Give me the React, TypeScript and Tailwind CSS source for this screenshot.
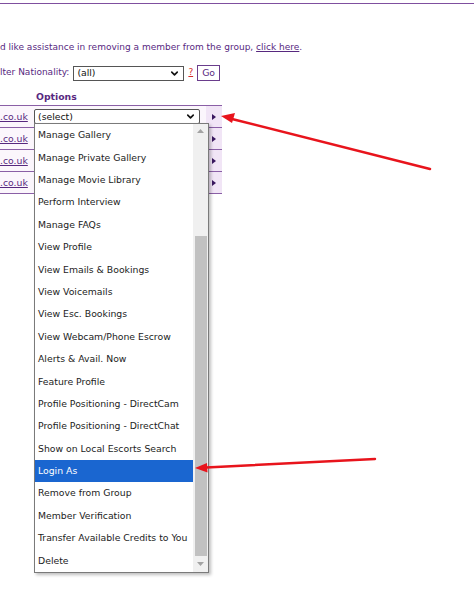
import { ChevronDown } from "lucide-react";

const options = [
  "Manage Gallery",
  "Manage Private Gallery",
  "Manage Movie Library",
  "Perform Interview",
  "Manage FAQs",
  "View Profile",
  "View Emails & Bookings",
  "View Voicemails",
  "View Esc. Bookings",
  "View Webcam/Phone Escrow",
  "Alerts & Avail. Now",
  "Feature Profile",
  "Profile Positioning - DirectCam",
  "Profile Positioning - DirectChat",
  "Show on Local Escorts Search",
  "Login As",
  "Remove from Group",
  "Member Verification",
  "Transfer Available Credits to You",
  "Delete",
];

function Triangle() {
  return (
    <svg width="4" height="6" viewBox="0 0 4 6">
      <path d="M0 0 L4 3 L0 6 Z" fill="#3a1760" />
    </svg>
  );
}

function MemberRow({ first }: { first?: boolean }) {
  return (
    <div className="flex h-[22px] items-center border-b border-[#8a5fa6] bg-[#fbf6fc] text-[9.3px]">
      <div className="w-[32px]">
        <a className="underline">.co.uk</a>
      </div>
      <div className="w-[174px] pl-[2px]">
        {first && (
          <div className="flex h-[15px] w-[166px] items-center justify-between rounded-[2px] border border-[#555] bg-white pl-[3px] pr-[3px] text-[#111]">
            <span>(select)</span>
            <ChevronDown size={11} strokeWidth={3.5} color="#111" />
          </div>
        )}
      </div>
      <div className="flex h-full w-[16px] items-center justify-center bg-[#f1e5f6]">
        <Triangle />
      </div>
    </div>
  );
}

export default function App() {
  return (
    <div className="relative h-[604px] w-[474px] overflow-hidden bg-white font-['DejaVu_Sans',Verdana,sans-serif] text-[9px] text-[#57287f]">
      <div className="mt-[3px] border-t border-[#7f4f9f]" />

      <p className="mt-[37px] leading-[12px]">
        d like assistance in removing a member from the group,{" "}
        <a className="underline">click here</a>.
      </p>

      {/* filter */}
      <div className="mt-[12px] flex h-[16px] items-center">
        <span>lter Nationality:</span>
        <div className="ml-[4px] flex h-[15px] w-[111px] items-center justify-between border border-[#555] bg-white px-[3px] text-[9.3px] text-[#111]">
          <span>(all)</span>
          <ChevronDown size={11} strokeWidth={3.5} color="#111" />
        </div>
        <a className="ml-[4px] text-[#d42a2a] underline">?</a>
        <button className="ml-[4px] h-[16px] border border-[#6a3d8c] bg-white px-[4px] text-[9.3px] leading-none text-[#57287f]">
          Go
        </button>
      </div>

      {/* table */}
      <div className="w-[222px]">
        <div className="mt-[7px] flex h-[18px] items-center border-b border-[#8a5fa6] pl-[36px] text-[9.3px] font-bold">
          Options
        </div>
        <MemberRow first />
        <MemberRow />
        <MemberRow />
        <MemberRow />
      </div>

      {/* open dropdown list */}
      <div className="absolute left-[34px] top-[123px] flex h-[450px] w-[175px] border border-[#7a7a7a] bg-white text-[9.3px] text-[#1c1c1c] shadow-[2px_2px_3px_rgba(0,0,0,0.25)]">
        <div className="flex-1">
          {options.map((o) => (
            <div
              key={o}
              className={`flex h-[22.4px] items-center whitespace-nowrap pl-[3px] ${
                o === "Login As" ? "bg-[#1a66d0] text-white" : ""
              }`}
            >
              {o}
            </div>
          ))}
        </div>
        <div className="flex w-[15px] flex-col items-center bg-[#f0f0f0]">
          <div className="flex h-[14px] items-center justify-center">
            <svg width="7" height="4" viewBox="0 0 7 4">
              <path d="M0 4 L3.5 0 L7 4 Z" fill="#a3a3a3" />
            </svg>
          </div>
          <div className="mt-[98px] h-[320px] w-[12px] bg-[#c1c1c1]" />
          <div className="flex flex-1 items-center justify-center">
            <svg width="7" height="4" viewBox="0 0 7 4">
              <path d="M0 0 L3.5 4 L7 0 Z" fill="#a3a3a3" />
            </svg>
          </div>
        </div>
      </div>

      {/* annotation arrows */}
      <svg
        className="pointer-events-none absolute left-0 top-0"
        width="474"
        height="604"
        viewBox="0 0 474 604"
      >
        <line x1="430" y1="169" x2="232" y2="119" stroke="#e8141c" strokeWidth="2.5" strokeLinecap="round" />
        <path d="M221 116 L235 113 L232 123 Z" fill="#e8141c" />
        <line x1="375" y1="459" x2="206" y2="467.5" stroke="#e8141c" strokeWidth="2.5" strokeLinecap="round" />
        <path d="M195 468 L207 463 L207.5 472.5 Z" fill="#e8141c" />
      </svg>
    </div>
  );
}
